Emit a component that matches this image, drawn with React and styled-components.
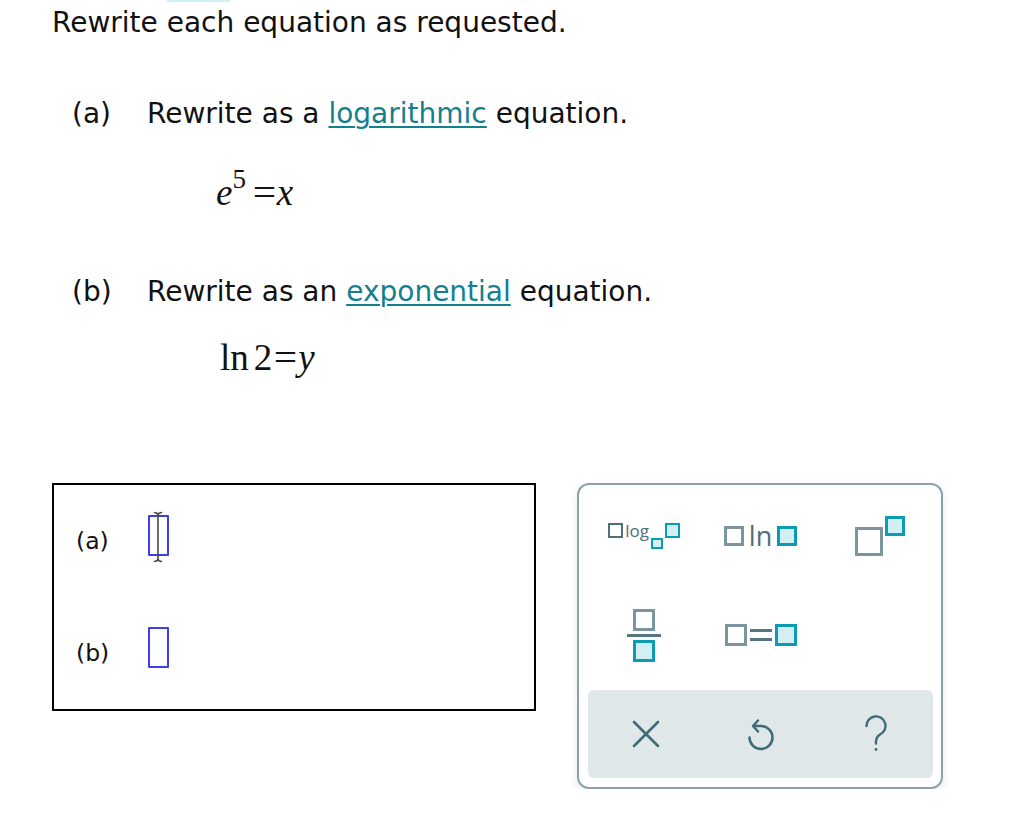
import React from "react";
import styled, { createGlobalStyle } from "styled-components";

const GlobalStyle = createGlobalStyle`
  body {
    margin: 0;
    background: #fff;
    color: #111;
    font-family: "DejaVu Sans", Verdana, sans-serif;
  }
`;

// icons of the bottom toolbar
const CloseIcon = () => (
  <svg width="28" height="28" viewBox="0 0 28 28" fill="none" stroke="#3e6b77" strokeWidth="2.6" strokeLinecap="round">
    <path d="M2 2 L26 26 M26 2 L2 26" />
  </svg>
);

const UndoIcon = () => (
  <svg width="28" height="36" viewBox="0 0 28 36" fill="none" stroke="#3e6b77" strokeWidth="2.5" strokeLinecap="round" strokeLinejoin="round">
    <path d="M6.5 10 H14 A11.5 11.5 0 1 1 2.5 21.5" />
    <path d="M11 4.5 L6 10 L11 15.5" />
  </svg>
);

const HelpIcon = () => (
  <svg width="26" height="38" viewBox="0 0 26 38" fill="none" stroke="#3e6b77" strokeWidth="2.4" strokeLinecap="round">
    <path d="M3.5 11 A9.5 9.5 0 1 1 17 19.5 Q13 22 13 27 V28.5" />
    <circle cx="13" cy="34.5" r="1.4" fill="#3e6b77" stroke="none" />
  </svg>
);

const IBeam = () => (
  <svg width="12" height="52" viewBox="0 0 12 52" fill="none" stroke="#4a4a4a" strokeWidth="1.6" strokeLinecap="round">
    <path d="M6 3 V49" />
    <path d="M2.5 1.5 Q6 2 6 4 Q6 2 9.5 1.5" />
    <path d="M2.5 50.5 Q6 50 6 48 Q6 50 9.5 50.5" />
  </svg>
);

const App = () => {
  return (
    <>
      <GlobalStyle />
      <Page>
        <TopTab />
        <Title>Rewrite each equation as requested.</Title>

        <Part $gap={55}>
          <PartLabel>(a)</PartLabel>
          Rewrite as a <Link>logarithmic</Link> equation.
        </Part>
        <MathLine $gap={37} $indent={164}>
          <MI>e</MI>
          <Sup>5</Sup>
          <Eq $left={8}>=</Eq>
          <MI>x</MI>
        </MathLine>

        <Part $gap={54}>
          <PartLabel>(b)</PartLabel>
          Rewrite as an <Link>exponential</Link> equation.
        </Part>
        <MathLine $gap={24} $indent={168}>
          <MR>ln</MR>
          <MR $pad={5}>2</MR>
          <Eq $left={3}>=</Eq>
          <MI>y</MI>
        </MathLine>

        <Bottom>
          <AnswerBox>
            <AnswerRow>
              <AnswerLabel>(a)</AnswerLabel>
              <Slot>
                <Cursor>
                  <IBeam />
                </Cursor>
              </Slot>
            </AnswerRow>
            <AnswerRow>
              <AnswerLabel>(b)</AnswerLabel>
              <Slot />
            </AnswerRow>
          </AnswerBox>

          <Panel>
            <Keys>
              <Key>
                <LogFace>
                  <Box $w={15} $h={15} $b={2} $tone="dark" />
                  <KeyText $size={17} $up={-1}>log</KeyText>
                  <Box $w={12} $h={11} $b={2} $tone="teal" $top={15} />
                  <Box $w={15} $h={15} $b={2} $tone="teal" />
                </LogFace>
              </Key>
              <Key>
                <Face $gap={5}>
                  <Box $w={20} $h={20} $b={3} />
                  <KeyText $size={27} $up={-2}>ln</KeyText>
                  <Box $w={20} $h={20} $b={3} $tone="teal" />
                </Face>
              </Key>
              <Key>
                <PowerFace>
                  <Box $w={28} $h={29} $b={3} $top={11} />
                  <Box $w={20} $h={20} $b={3} $tone="teal" />
                </PowerFace>
              </Key>
              <Key>
                <FracFace>
                  <Box $w={22} $h={22} $b={3} />
                  <Bar $w={34} />
                  <Box $w={22} $h={22} $b={3} $tone="teal" />
                </FracFace>
              </Key>
              <Key>
                <Face $gap={3}>
                  <Box $w={22} $h={22} $b={3} />
                  <Equals>
                    <Bar $w={22} />
                    <Bar $w={22} />
                  </Equals>
                  <Box $w={22} $h={22} $b={3} $tone="teal" />
                </Face>
              </Key>
            </Keys>

            <Toolbar>
              <ToolButton>
                <CloseIcon />
              </ToolButton>
              <ToolButton>
                <UndoIcon />
              </ToolButton>
              <ToolButton>
                <HelpIcon />
              </ToolButton>
            </Toolbar>
          </Panel>
        </Bottom>
      </Page>
    </>
  );
};

const Page = styled.div`
  width: 1016px;
  padding-left: 52px;
  box-sizing: border-box;
`;

const TopTab = styled.div`
  width: 63px;
  height: 2px;
  margin-left: 115px;
  background: #cdf1f5;
`;

const Title = styled.h1`
  margin: 3px 0 0 0;
  font-size: 28px;
  font-weight: normal;
  line-height: 36px;
`;

const Part = styled.div`
  margin-top: ${(p) => p.$gap}px;
  padding-left: 20px;
  font-size: 28px;
  line-height: 36px;
  display: flex;
  white-space: pre;
`;

const PartLabel = styled.span`
  width: 75px;
`;

const Link = styled.span`
  color: #14808f;
  text-decoration: underline;
  text-underline-offset: 3px;
  text-decoration-thickness: 1.5px;
`;

const MathLine = styled.div`
  margin-top: ${(p) => p.$gap}px;
  padding-left: ${(p) => p.$indent}px;
  font-family: "Liberation Serif", "Times New Roman", serif;
  font-size: 37px;
  line-height: 48px;
  display: flex;
  align-items: baseline;
`;

const MI = styled.span`
  font-style: italic;
`;

const MR = styled.span`
  padding-left: ${(p) => p.$pad || 0}px;
`;

const Sup = styled.span`
  font-size: 27px;
  position: relative;
  top: -17px;
  margin-left: 0;
`;

const Eq = styled.span`
  margin: 0 2px 0 ${(p) => p.$left}px;
  transform: scaleX(1.12);
`;

const Bottom = styled.div`
  margin-top: 101px;
  display: flex;
  align-items: flex-start;
`;

const AnswerBox = styled.div`
  width: 484px;
  height: 228px;
  box-sizing: border-box;
  border: 2px solid #000;
  padding: 30px 0 0 22px;
  display: flex;
  flex-direction: column;
  gap: 71px;
`;

const AnswerRow = styled.div`
  display: flex;
  align-items: center;
`;

const AnswerLabel = styled.span`
  width: 72px;
  font-size: 23.5px;
  line-height: 26px;
  padding-top: 11px;
`;

const Slot = styled.span`
  position: relative;
  width: 21px;
  height: 41px;
  box-sizing: border-box;
  border: 2px solid #3d3df2;
  border-radius: 1px;
`;

const Cursor = styled.span`
  position: absolute;
  left: 2px;
  top: -6px;
  display: flex;
`;

const Panel = styled.div`
  margin-left: 41px;
  width: 366px;
  height: 306px;
  box-sizing: border-box;
  border: 2px solid #8aa3aa;
  border-radius: 12px;
  padding: 9px 8px 9px 9px;
  box-shadow: 0 3px 8px rgba(0, 0, 0, 0.1);
  display: flex;
  flex-direction: column;
`;

const Keys = styled.div`
  margin-top: 12px;
  display: grid;
  grid-template-columns: repeat(3, 1fr);
  grid-auto-rows: 60px;
  row-gap: 39px;
`;

const Key = styled.div`
  display: flex;
  align-items: center;
  justify-content: center;
`;

const Face = styled.div`
  display: flex;
  align-items: center;
  gap: ${(p) => p.$gap}px;
`;

const LogFace = styled.div`
  display: flex;
  align-items: flex-start;
  gap: 2px;
  height: 26px;
  margin-left: -3px;
`;

const PowerFace = styled.div`
  display: flex;
  align-items: flex-start;
  gap: 2px;
  margin-left: 8px;
`;

const FracFace = styled.div`
  display: flex;
  flex-direction: column;
  align-items: center;
  gap: 3px;
  margin-left: -3px;
`;

const Equals = styled.div`
  display: flex;
  flex-direction: column;
  gap: 6px;
`;

const tones = {
  grey: { border: "#7a959d", fill: "transparent" },
  dark: { border: "#4f6f79", fill: "transparent" },
  teal: { border: "#0b9bb2", fill: "#d2eff3" },
};

const Box = styled.span`
  display: block;
  width: ${(p) => p.$w}px;
  height: ${(p) => p.$h}px;
  box-sizing: border-box;
  border: ${(p) => p.$b}px solid ${(p) => tones[p.$tone || "grey"].border};
  background: ${(p) => tones[p.$tone || "grey"].fill};
  margin-top: ${(p) => p.$top || 0}px;
`;

const KeyText = styled.span`
  font-family: "Open Sans", "DejaVu Sans", sans-serif;
  font-size: ${(p) => p.$size}px;
  line-height: 1;
  color: #4f6f79;
  margin-top: ${(p) => p.$up}px;
`;

const Bar = styled.span`
  display: block;
  width: ${(p) => p.$w}px;
  height: 3px;
  background: #557680;
`;

const Toolbar = styled.div`
  margin-top: 25px;
  height: 88px;
  border-radius: 6px;
  background: #e0e7e9;
  display: grid;
  grid-template-columns: repeat(3, 1fr);
`;

const ToolButton = styled.div`
  display: flex;
  align-items: center;
  justify-content: center;
`;

export default App;
